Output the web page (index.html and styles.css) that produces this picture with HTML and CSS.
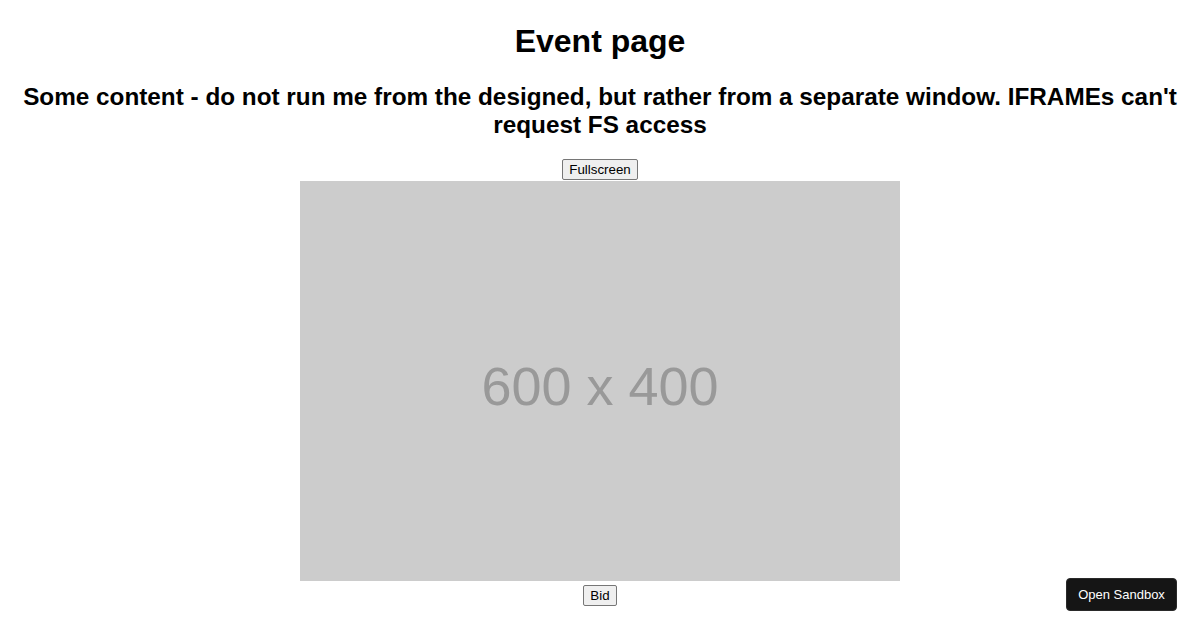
FILE: index.html
```html
<!DOCTYPE html>
<html>
<head>
<meta charset="utf-8">
<title>Event page</title>
<link rel="stylesheet" href="styles.css">
</head>
<body>
<h1 class="title">Event page</h1>
<h2 class="subtitle">Some content - do not run me from the designed, but rather from a separate window. IFRAMEs can't request FS access</h2>
<div class="stage">
  <button class="btn">Fullscreen</button>
  <div class="placeholder">600 x 400</div>
  <button class="btn">Bid</button>
</div>
<button class="sandbox">Open Sandbox</button>
</body>
</html>
```
FILE: styles.css
```css
html, body {
  background: #fff;
}
body {
  margin: 8px;
  font-family: "Liberation Sans", Arial, sans-serif;
  color: #000;
  text-align: center;
}
.title {
  font-size: 32px;
  font-weight: bold;
  margin: 15.44px 0 22.44px;
  line-height: normal;
}
.subtitle {
  font-size: 24.3px;
  font-weight: bold;
  margin: 19.92px 0;
  line-height: normal;
}
.stage {
  display: flex;
  flex-direction: column;
  align-items: center;
  margin-top: 20px;
}
.btn {
  font-family: "Liberation Sans", Arial, sans-serif;
  font-size: 13.33px;
  padding: 1px 6px;
  height: 21px;
  border: 1px solid #767676;
  border-radius: 2px;
  background: #efefef;
  color: #000;
}
.placeholder {
  box-sizing: border-box;
  width: 600px;
  height: 400px;
  margin: 1px 0 4px;
  padding-top: 10px;
  background: #cccccc;
  color: #999999;
  font-size: 54px;
  display: flex;
  align-items: center;
  justify-content: center;
}
.sandbox {
  position: fixed;
  right: 23px;
  bottom: 19px;
  width: 111px;
  height: 33px;
  background: #151515;
  color: #fff;
  border: 1px solid #2a2a2a;
  border-radius: 4px;
  font-family: "Liberation Sans", Arial, sans-serif;
  font-size: 13px;
  padding: 0;
}
```
